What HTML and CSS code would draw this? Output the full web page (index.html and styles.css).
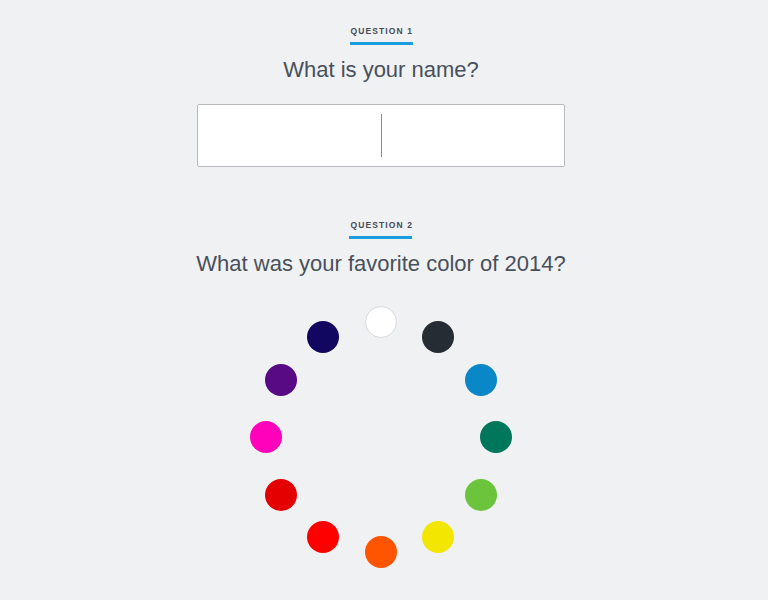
FILE: index.html
```html
<!DOCTYPE html>
<html lang="en">
<head>
<meta charset="utf-8">
<title>Quiz</title>
<link rel="stylesheet" href="styles.css">
</head>
<body>
<main class="quiz">
  <section class="question">
    <div class="label">Question 1</div>
    <h2 class="title">What is your name?</h2>
    <div class="answer-input"><span class="caret"></span></div>
  </section>
  <section class="question q2">
    <div class="label">Question 2</div>
    <h2 class="title">What was your favorite color of 2014?</h2>
    <div class="wheel">
      <span class="dot d0 c-white"></span>
      <span class="dot d1 c-dark"></span>
      <span class="dot d2 c-blue"></span>
      <span class="dot d3 c-teal"></span>
      <span class="dot d4 c-lime"></span>
      <span class="dot d5 c-yellow"></span>
      <span class="dot d6 c-orange"></span>
      <span class="dot d7 c-red"></span>
      <span class="dot d8 c-crimson"></span>
      <span class="dot d9 c-pink"></span>
      <span class="dot d10 c-purple"></span>
      <span class="dot d11 c-navy"></span>
    </div>
  </section>
</main>
</body>
</html>
```

FILE: styles.css
```css
html, body {
  margin: 0;
  padding: 0;
  background: #f0f1f3;
  font-family: "Liberation Sans", Arial, Helvetica, sans-serif;
}

.quiz {
  width: 762px;
  padding-top: 26px;
  display: flex;
  flex-direction: column;
  align-items: center;
}

.question {
  display: flex;
  flex-direction: column;
  align-items: center;
}

.q2 {
  margin-top: 53px;
}

.label {
  width: 63px;
  text-align: center;
  font-size: 8.5px;
  line-height: 10px;
  font-weight: bold;
  text-transform: uppercase;
  letter-spacing: 1.1px;
  text-indent: 1.1px;
  color: #474c57;
  padding-bottom: 6px;
  border-bottom: 3px solid #1a9ddf;
  white-space: nowrap;
}

.title {
  margin: 11px 0 0;
  font-size: 22px;
  line-height: 27px;
  font-weight: normal;
  color: #48505c;
}

.answer-input {
  margin-top: 21px;
  box-sizing: border-box;
  width: 368px;
  height: 63px;
  background: #ffffff;
  border: 1px solid #b9bbbe;
  border-radius: 2px;
  display: flex;
  justify-content: center;
  align-items: center;
}

.caret {
  width: 1px;
  height: 43px;
  background: #8a8a8a;
}

.wheel {
  position: relative;
  width: 262px;
  height: 262px;
  margin-top: 29px;
}

.dot {
  position: absolute;
  width: 32px;
  height: 32px;
  border-radius: 50%;
  box-sizing: border-box;
}

.d0 { left: 115px; top: 0; }
.d1 { left: 172.5px; top: 15.4px; }
.d2 { left: 214.6px; top: 57.5px; }
.d3 { left: 230px; top: 115px; }
.d4 { left: 214.6px; top: 172.5px; }
.d5 { left: 172.5px; top: 214.6px; }
.d6 { left: 115px; top: 230px; }
.d7 { left: 57.5px; top: 214.6px; }
.d8 { left: 15.4px; top: 172.5px; }
.d9 { left: 0; top: 115px; }
.d10 { left: 15.4px; top: 57.5px; }
.d11 { left: 57.5px; top: 15.4px; }

.c-white { background: #ffffff; border: 1px solid #d6d8dc; }
.c-dark { background: #262c34; }
.c-blue { background: #0a87c6; }
.c-teal { background: #00775a; }
.c-lime { background: #6cc43c; }
.c-yellow { background: #f3e600; }
.c-orange { background: #ff5500; }
.c-red { background: #ff0000; }
.c-crimson { background: #e40000; }
.c-pink { background: #ff00bb; }
.c-purple { background: #570a84; }
.c-navy { background: #110660; }
```
